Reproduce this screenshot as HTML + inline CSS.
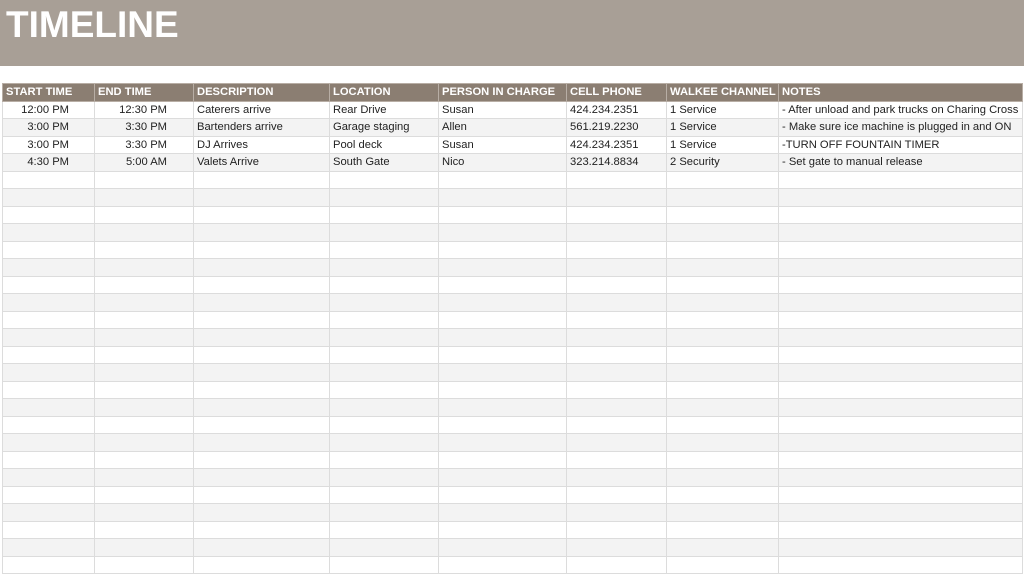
<!DOCTYPE html>
<html><head><style>
body{margin:0;width:1024px;height:566px;overflow:hidden;background:#fff;font-family:"Liberation Sans",Arial,sans-serif;position:relative}
.band{position:absolute;left:0;top:0;width:1024px;height:66px;background:#a89f96}
.band h1{position:absolute;left:6px;top:3px;margin:0;font-size:37px;font-weight:bold;color:#fff;line-height:44px}
table{position:absolute;left:2px;top:83px;width:1020px;border-collapse:collapse;table-layout:fixed;font-size:11.2px;color:#222}
td,th{height:16.5px;padding:0 3px;border:1px solid #dcdcdc;white-space:nowrap;overflow:hidden;line-height:16px}
th{background:#8b7e72;color:#fff;text-align:left;font-weight:bold;border-color:#b8aea5}
tr:nth-child(odd) td{background:#f3f3f3}
td.r{text-align:right;padding-right:25px}
td.r2{text-align:right;padding-right:26px}
</style></head><body>
<div class="band"><h1>TIMELINE</h1></div>
<table>
<colgroup><col style="width:92px"><col style="width:99px"><col style="width:136px"><col style="width:109px"><col style="width:128px"><col style="width:100px"><col style="width:112px"><col style="width:244px"></colgroup>
<tr><th>START TIME</th><th>END TIME</th><th>DESCRIPTION</th><th>LOCATION</th><th>PERSON IN CHARGE</th><th>CELL PHONE</th><th>WALKEE CHANNEL</th><th>NOTES</th></tr>
<tr><td class="r">12:00 PM</td><td class="r2">12:30 PM</td><td>Caterers arrive</td><td>Rear Drive</td><td>Susan</td><td>424.234.2351</td><td>1 Service</td><td>- After unload and park trucks on Charing Cross</td></tr>
<tr><td class="r">3:00 PM</td><td class="r2">3:30 PM</td><td>Bartenders arrive</td><td>Garage staging</td><td>Allen</td><td>561.219.2230</td><td>1 Service</td><td>- Make sure ice machine is plugged in and ON</td></tr>
<tr><td class="r">3:00 PM</td><td class="r2">3:30 PM</td><td>DJ Arrives</td><td>Pool deck</td><td>Susan</td><td>424.234.2351</td><td>1 Service</td><td>-TURN OFF FOUNTAIN TIMER</td></tr>
<tr><td class="r">4:30 PM</td><td class="r2">5:00 AM</td><td>Valets Arrive</td><td>South Gate</td><td>Nico</td><td>323.214.8834</td><td>2 Security</td><td>- Set gate to manual release</td></tr>
<tr><td></td><td></td><td></td><td></td><td></td><td></td><td></td><td></td></tr>
<tr><td></td><td></td><td></td><td></td><td></td><td></td><td></td><td></td></tr>
<tr><td></td><td></td><td></td><td></td><td></td><td></td><td></td><td></td></tr>
<tr><td></td><td></td><td></td><td></td><td></td><td></td><td></td><td></td></tr>
<tr><td></td><td></td><td></td><td></td><td></td><td></td><td></td><td></td></tr>
<tr><td></td><td></td><td></td><td></td><td></td><td></td><td></td><td></td></tr>
<tr><td></td><td></td><td></td><td></td><td></td><td></td><td></td><td></td></tr>
<tr><td></td><td></td><td></td><td></td><td></td><td></td><td></td><td></td></tr>
<tr><td></td><td></td><td></td><td></td><td></td><td></td><td></td><td></td></tr>
<tr><td></td><td></td><td></td><td></td><td></td><td></td><td></td><td></td></tr>
<tr><td></td><td></td><td></td><td></td><td></td><td></td><td></td><td></td></tr>
<tr><td></td><td></td><td></td><td></td><td></td><td></td><td></td><td></td></tr>
<tr><td></td><td></td><td></td><td></td><td></td><td></td><td></td><td></td></tr>
<tr><td></td><td></td><td></td><td></td><td></td><td></td><td></td><td></td></tr>
<tr><td></td><td></td><td></td><td></td><td></td><td></td><td></td><td></td></tr>
<tr><td></td><td></td><td></td><td></td><td></td><td></td><td></td><td></td></tr>
<tr><td></td><td></td><td></td><td></td><td></td><td></td><td></td><td></td></tr>
<tr><td></td><td></td><td></td><td></td><td></td><td></td><td></td><td></td></tr>
<tr><td></td><td></td><td></td><td></td><td></td><td></td><td></td><td></td></tr>
<tr><td></td><td></td><td></td><td></td><td></td><td></td><td></td><td></td></tr>
<tr><td></td><td></td><td></td><td></td><td></td><td></td><td></td><td></td></tr>
<tr><td></td><td></td><td></td><td></td><td></td><td></td><td></td><td></td></tr>
<tr><td></td><td></td><td></td><td></td><td></td><td></td><td></td><td></td></tr>
</table>
</body></html>
